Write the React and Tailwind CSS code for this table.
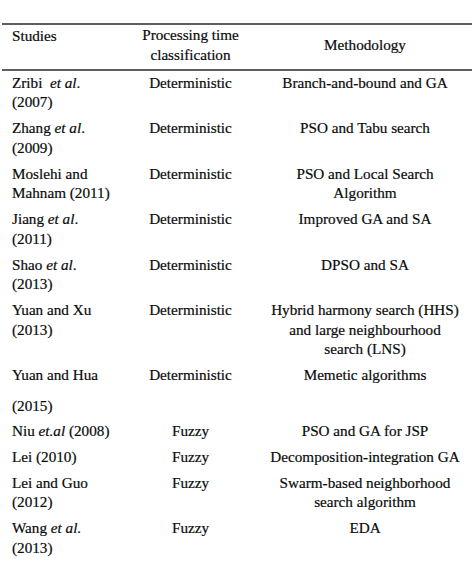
import React from "react";

const I = ({ children }) => <i className="italic">{children}</i>;

const rows = [
  { s: [<>Zribi&nbsp; <I>et al</I>.</>, "(2007)"], p: "Deterministic", m: ["Branch-and-bound and GA"] },
  { s: [<>Zhang <I>et al</I>.</>, "(2009)"], p: "Deterministic", m: ["PSO and Tabu search"] },
  { s: ["Moslehi and", "Mahnam (2011)"], p: "Deterministic", m: ["PSO and Local Search", "Algorithm"] },
  { s: [<>Jiang <I>et al</I>.</>, "(2011)"], p: "Deterministic", m: ["Improved GA and SA"] },
  { s: [<>Shao <I>et al</I>.</>, "(2013)"], p: "Deterministic", m: ["DPSO and SA"] },
  { s: ["Yuan and Xu", "(2013)"], p: "Deterministic", m: ["Hybrid harmony search (HHS)", "and large neighbourhood", "search (LNS)"] },
  { s: ["Yuan and Hua", "(2015)"], p: "Deterministic", m: ["Memetic algorithms"], gap: true },
  { s: [<>Niu <I>et.al</I> (2008)</>], p: "Fuzzy", m: ["PSO and GA for JSP"] },
  { s: ["Lei (2010)"], p: "Fuzzy", m: ["Decomposition-integration GA"] },
  { s: ["Lei and Guo", "(2012)"], p: "Fuzzy", m: ["Swarm-based neighborhood", "search algorithm"] },
  { s: [<>Wang <I>et al.</I></>, "(2013)"], p: "Fuzzy", m: ["EDA"] },
];

export default function App() {
  return (
    <div
      className="w-[474px] h-[564px] bg-white overflow-hidden text-[#0a0a0a] text-[15.2px] leading-[19.5px] [-webkit-text-stroke:0.2px_#0a0a0a]"
      style={{ fontFamily: '"Liberation Serif", "Times New Roman", serif' }}
    >
      <div className="h-[23px]" />
      <div className="ml-[2px] w-[470px]">
        <div className="h-[2px] bg-[#5e5e5e]" />
        <div className="grid grid-cols-[121px_135px_214px] h-[44px]">
          <div className="pl-[10px] pt-[1px]">Studies</div>
          <div className="text-center">
            <div>Processing time</div>
            <div>classification</div>
          </div>
          <div className="text-center flex items-center justify-center pb-[5px]">Methodology</div>
        </div>
        <div className="h-[2px] bg-[#5e5e5e]" />
        <div className="h-[1.5px]" />
        {rows.map((r, i) => (
          <div
            key={i}
            className={`grid grid-cols-[121px_135px_214px] ${r.gap ? "pb-[5px]" : "pb-[6.5px]"}`}
          >
            <div className="pl-[10px]">
              {r.s.map((l, j) => (
                <div key={j} className={r.gap && j === 1 ? "mt-[11.5px]" : ""}>
                  {l}
                </div>
              ))}
            </div>
            <div className="text-center">{r.p}</div>
            <div className="text-center">
              {r.m.map((l, j) => (
                <div key={j}>{l}</div>
              ))}
            </div>
          </div>
        ))}
      </div>
      <div className="flex h-[3px] bg-[#d2d2d2]">
        <div className="w-[123px] border-r border-[#bdbdbd]" />
        <div className="w-[135px] border-r border-[#bdbdbd]" />
      </div>
    </div>
  );
}
